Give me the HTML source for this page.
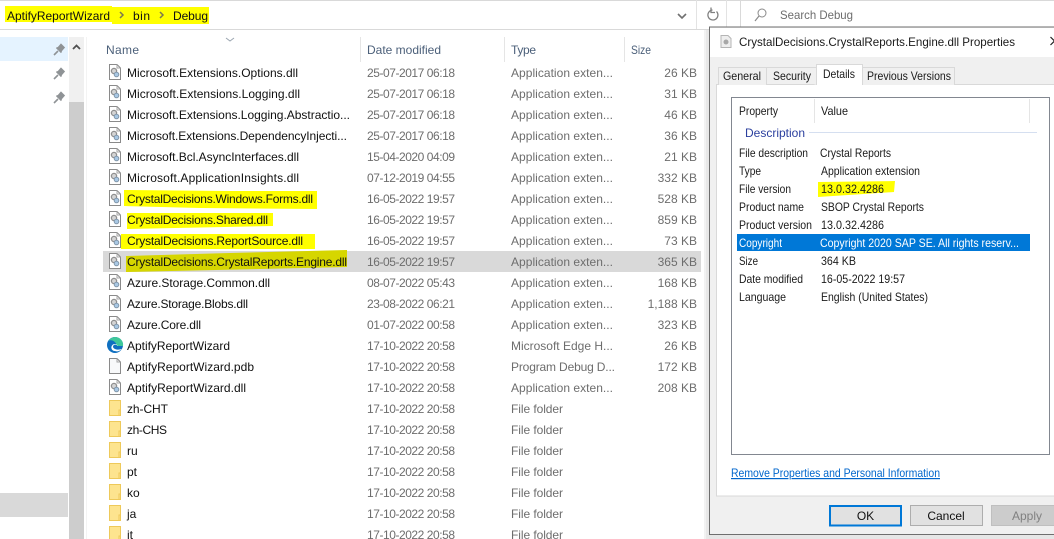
<!DOCTYPE html>
<html><head><meta charset="utf-8"><title>Debug</title>
<style>
html,body{margin:0;padding:0;background:#fff;width:1054px;height:539px;overflow:hidden}
svg{display:block}
text{font-family:"Liberation Sans",sans-serif;font-size:12px}
.n text{fill:#101010}
.g text{fill:#6d6d6d}
.s text{fill:#6d6d6d;text-anchor:end}
.h text{fill:#4c607a}
.d text{fill:#1a1a1a}
</style></head><body>
<svg width="1054" height="539" viewBox="0 0 1054 539" xmlns="http://www.w3.org/2000/svg">
<defs>
<g id="dll"><path d="M.5.500H8L11.500 4V15.500H.5Z" fill="#fff" stroke="#8a8a8a"/><path d="M8 .5V4H11.500" fill="none" stroke="#a5a5a5"/><circle cx="5" cy="7" r="2.600" fill="#d5d5d5" stroke="#8f8f8f" stroke-width="1.300"/><circle cx="7.500" cy="10.500" r="2.300" fill="#a9c8e4" stroke="#8197ab"/></g>
<g id="pdb"><path d="M.5.500H8L11.500 4V15.500H.5Z" fill="#f8f9fa" stroke="#8a8a8a"/><path d="M8 .5V4H11.500" fill="none" stroke="#a5a5a5"/></g>
<g id="fld"><path d="M.5.500H11.500V15.500H.5Z" fill="#fde48f" stroke="#eec95a"/><path d="M10 15V10H11.500" fill="none" stroke="#eec95a"/></g>
<g id="pin"><path d="M5 9 1 13M3.500 5.500 8.500 10.500M5 6 8 2.500 11 5.500 8 9Z" fill="#8f9396" stroke="#8f9396" stroke-width="1.600"/></g>
</defs>

<rect width="1054" height="539" fill="#fff"/>
<!-- top bar -->
<rect x="0" y="0" width="1054" height="1" fill="#d9d9d9"/>
<rect x="0" y="29" width="726" height="1" fill="#d9d9d9"/>
<rect x="740" y="0" width="1" height="30" fill="#d9d9d9"/>
<rect x="696" y="0" width="1" height="29" fill="#e3e3e3"/>
<rect x="726" y="0" width="1" height="29" fill="#e3e3e3"/>
<rect x="740" y="29" width="314" height="1" fill="#d9d9d9"/>
<path d="M5 6H112V7H209V24H112V22H5Z" fill="#ffff00"/>
<text x="7" y="20" fill="#111" textLength="103" lengthAdjust="spacingAndGlyphs">AptifyReportWizard</text>
<path d="M120 12l3 3-3 3M160 12l3 3-3 3" fill="none" stroke="#7a7a50" stroke-width="1.500"/>
<text x="133" y="20" fill="#111" textLength="17">bin</text>
<text x="173" y="20" fill="#111" textLength="35">Debug</text>
<path d="M678 14l4 4 4-4" fill="none" stroke="#707070" stroke-width="1.600"/>
<path d="M716.500 11.500a5 5 0 1 1-4-1.500M711 7.500v5h4" fill="none" stroke="#808080" stroke-width="1.300"/>
<circle cx="762" cy="13" r="4" fill="none" stroke="#8a8a8a"/><path d="M759 16l-4 5" stroke="#8a8a8a" stroke-width="1.200"/>
<text x="780" y="19" fill="#6d6d6d" textLength="73" lengthAdjust="spacingAndGlyphs">Search Debug</text>

<!-- nav pane -->
<rect x="0" y="37" width="68" height="24" fill="#e5f3ff"/>
<rect x="0" y="493" width="68" height="24" fill="#d9d9d9"/>
<use href="#pin" x="53" y="42"/><use href="#pin" x="53" y="66"/><use href="#pin" x="53" y="90"/>
<rect x="69" y="37" width="15" height="502" fill="#f0f0f0"/>
<rect x="69" y="102" width="15" height="437" fill="#cdcdcd"/>
<path d="M73 49l3.500-3.500 3.500 3.500" fill="none" stroke="#505050" stroke-width="1.800"/>
<rect x="86" y="37" width="1" height="502" fill="#f3f3f3"/>

<!-- header -->
<path d="M226 38l4 3 4-3" fill="none" stroke="#9aa5b0"/>
<rect x="360" y="37" width="1" height="25" fill="#e5e5e5"/>
<rect x="504" y="37" width="1" height="25" fill="#e5e5e5"/>
<rect x="624" y="37" width="1" height="25" fill="#e5e5e5"/>
<rect x="704" y="37" width="1" height="25" fill="#e5e5e5"/>
<g class="h">
<text x="106" y="54" textLength="33">Name</text>
<text x="367" y="54" textLength="74" lengthAdjust="spacingAndGlyphs">Date modified</text>
<text x="511" y="54" textLength="25">Type</text>
<text x="631" y="54" textLength="20" lengthAdjust="spacingAndGlyphs">Size</text>
</g>

<!-- selection + highlights -->
<rect x="103" y="251" width="598" height="21" fill="#d9d9d9"/>
<path d="M124 190 230 191H317V209L200 208 124 206Z" fill="#ffff00"/>
<path d="M127 213H273V226L127 229Z" fill="#ffff00"/>
<path d="M121 234H315V249H121Z" fill="#ffff00"/>
<path d="M126 256 230 253 347 250V267L126 272Z" fill="#d6d600"/>

<!-- icons -->
<g transform="translate(0,-1)">
<use href="#dll" x="109" y="65"/><use href="#dll" x="109" y="86"/><use href="#dll" x="109" y="107"/><use href="#dll" x="109" y="128"/><use href="#dll" x="109" y="149"/><use href="#dll" x="109" y="170"/><use href="#dll" x="109" y="191"/><use href="#dll" x="109" y="212"/><use href="#dll" x="109" y="233"/><use href="#dll" x="109" y="254"/><use href="#dll" x="109" y="275"/><use href="#dll" x="109" y="296"/><use href="#dll" x="109" y="317"/>
<use href="#pdb" x="109" y="359"/><use href="#dll" x="109" y="380"/>
<use href="#fld" x="109" y="401"/><use href="#fld" x="109" y="422"/><use href="#fld" x="109" y="443"/><use href="#fld" x="109" y="464"/><use href="#fld" x="109" y="485"/><use href="#fld" x="109" y="506"/><use href="#fld" x="109" y="527"/>
</g>
<circle cx="115" cy="345" r="8" fill="#0f6fc0"/>
<path d="M108.500 341A7.800 7.800 0 0 1 123 346H117C116 341 111 339 108.500 341Z" fill="#3fc79a"/>
<path d="M118 346A3.500 3.500 0 1 0 115 351C117 352 120 351 122 349 119 350 114 350 113 347 113 344 116 344 118 346Z" fill="#fff"/>

<!-- names -->
<g class="n">
<text x="127" y="77" textLength="171">Microsoft.Extensions.Options.dll</text>
<text x="127" y="98" textLength="173">Microsoft.Extensions.Logging.dll</text>
<text x="127" y="119" textLength="223">Microsoft.Extensions.Logging.Abstractio...</text>
<text x="127" y="140" textLength="220">Microsoft.Extensions.DependencyInjecti...</text>
<text x="127" y="161" textLength="172">Microsoft.Bcl.AsyncInterfaces.dll</text>
<text x="127" y="182" textLength="172">Microsoft.ApplicationInsights.dll</text>
<text x="127" y="203" textLength="186">CrystalDecisions.Windows.Forms.dll</text>
<text x="127" y="224" textLength="141">CrystalDecisions.Shared.dll</text>
<text x="127" y="245" textLength="176">CrystalDecisions.ReportSource.dll</text>
<text x="127" y="266" textLength="220">CrystalDecisions.CrystalReports.Engine.dll</text>
<text x="127" y="287" textLength="143">Azure.Storage.Common.dll</text>
<text x="127" y="308" textLength="121">Azure.Storage.Blobs.dll</text>
<text x="127" y="329" textLength="74">Azure.Core.dll</text>
<text x="127" y="350" textLength="103">AptifyReportWizard</text>
<text x="127" y="371" textLength="127">AptifyReportWizard.pdb</text>
<text x="127" y="392" textLength="119">AptifyReportWizard.dll</text>
<text x="127" y="413" textLength="41">zh-CHT</text>
<text x="127" y="434" textLength="40">zh-CHS</text>
<text x="127" y="455">ru</text>
<text x="127" y="476">pt</text>
<text x="127" y="497">ko</text>
<text x="127" y="518">ja</text>
<text x="127" y="539">it</text>
</g>

<!-- dates -->
<g class="g">
<text x="367" y="77" textLength="88">25-07-2017 06:18</text>
<text x="367" y="98" textLength="88">25-07-2017 06:18</text>
<text x="367" y="119" textLength="88">25-07-2017 06:18</text>
<text x="367" y="140" textLength="88">25-07-2017 06:18</text>
<text x="367" y="161" textLength="88">15-04-2020 04:09</text>
<text x="367" y="182" textLength="88">07-12-2019 04:55</text>
<text x="367" y="203" textLength="88">16-05-2022 19:57</text>
<text x="367" y="224" textLength="88">16-05-2022 19:57</text>
<text x="367" y="245" textLength="88">16-05-2022 19:57</text>
<text x="367" y="266" textLength="88">16-05-2022 19:57</text>
<text x="367" y="287" textLength="88">08-07-2022 05:43</text>
<text x="367" y="308" textLength="88">23-08-2022 06:21</text>
<text x="367" y="329" textLength="88">01-07-2022 00:58</text>
<text x="367" y="350" textLength="88">17-10-2022 20:58</text>
<text x="367" y="371" textLength="88">17-10-2022 20:58</text>
<text x="367" y="392" textLength="88">17-10-2022 20:58</text>
<text x="367" y="413" textLength="88">17-10-2022 20:58</text>
<text x="367" y="434" textLength="88">17-10-2022 20:58</text>
<text x="367" y="455" textLength="88">17-10-2022 20:58</text>
<text x="367" y="476" textLength="88">17-10-2022 20:58</text>
<text x="367" y="497" textLength="88">17-10-2022 20:58</text>
<text x="367" y="518" textLength="88">17-10-2022 20:58</text>
<text x="367" y="539" textLength="88">17-10-2022 20:58</text>
</g>

<!-- types -->
<g class="g">
<text x="511" y="77" textLength="102">Application exten...</text>
<text x="511" y="98" textLength="102">Application exten...</text>
<text x="511" y="119" textLength="102">Application exten...</text>
<text x="511" y="140" textLength="102">Application exten...</text>
<text x="511" y="161" textLength="102">Application exten...</text>
<text x="511" y="182" textLength="102">Application exten...</text>
<text x="511" y="203" textLength="102">Application exten...</text>
<text x="511" y="224" textLength="102">Application exten...</text>
<text x="511" y="245" textLength="102">Application exten...</text>
<text x="511" y="266" textLength="102">Application exten...</text>
<text x="511" y="287" textLength="102">Application exten...</text>
<text x="511" y="308" textLength="102">Application exten...</text>
<text x="511" y="329" textLength="102">Application exten...</text>
<text x="511" y="350" textLength="102">Microsoft Edge H...</text>
<text x="511" y="371" textLength="104">Program Debug D...</text>
<text x="511" y="392" textLength="102">Application exten...</text>
<text x="511" y="413" textLength="52">File folder</text>
<text x="511" y="434" textLength="52">File folder</text>
<text x="511" y="455" textLength="52">File folder</text>
<text x="511" y="476" textLength="52">File folder</text>
<text x="511" y="497" textLength="52">File folder</text>
<text x="511" y="518" textLength="52">File folder</text>
<text x="511" y="539" textLength="52">File folder</text>
</g>

<!-- sizes -->
<g class="s">
<text x="697" y="77">26 KB</text><text x="697" y="98">31 KB</text><text x="697" y="119">46 KB</text><text x="697" y="140">36 KB</text><text x="697" y="161">21 KB</text><text x="697" y="182">332 KB</text><text x="697" y="203">528 KB</text><text x="697" y="224">859 KB</text><text x="697" y="245">73 KB</text><text x="697" y="266">365 KB</text><text x="697" y="287">168 KB</text><text x="697" y="308">1,188 KB</text><text x="697" y="329">323 KB</text><text x="697" y="350">26 KB</text><text x="697" y="371">172 KB</text><text x="697" y="392">208 KB</text>
</g>

<!-- dialog shadow -->
<rect x="704" y="30" width="5" height="509" fill="#f2f2f2"/>
<rect x="706" y="30" width="3" height="509" fill="#e8e8e8"/>
<rect x="709" y="535" width="345" height="4" fill="#e6e6e6"/>
<!-- dialog -->
<rect x="709.500" y="27" width="345" height="507.500" fill="#f0f0f0" stroke="#6e6e6e"/>
<rect x="710" y="28" width="344" height="29" fill="#fff"/>
<path d="M721 35.500H728L731 38.500V47.500H721Z" fill="#eee" stroke="#b5b5b5"/><circle cx="726" cy="42" r="2.500" fill="#a8a8a8"/>
<text x="739" y="46" fill="#1a1a1a" textLength="276" lengthAdjust="spacingAndGlyphs">CrystalDecisions.CrystalReports.Engine.dll Properties</text>
<path d="M1050.500 37l8 8M1058.500 37l-8 8" stroke="#222" stroke-width="1.200"/>
<!-- tab panel -->
<rect x="716.500" y="84.500" width="340" height="411.500" fill="#fff" stroke="#d9d9d9"/>
<!-- tabs -->
<path d="M718.500 85V67.500H766.500V85M766.500 67.500H816.500V85M862.500 85V67.500H954.500V85" fill="#f0f0f0" stroke="#d9d9d9"/>
<path d="M816.500 85V64.500H862.500V85" fill="#fff" stroke="#d9d9d9"/>
<rect x="817" y="84" width="45" height="2" fill="#fff"/>
<g class="d">
<text x="723" y="80" textLength="38" lengthAdjust="spacingAndGlyphs">General</text>
<text x="773" y="80" textLength="38" lengthAdjust="spacingAndGlyphs">Security</text>
<text x="823" y="78" textLength="32" lengthAdjust="spacingAndGlyphs">Details</text>
<text x="867" y="80" textLength="84" lengthAdjust="spacingAndGlyphs">Previous Versions</text>
</g>
<!-- list -->
<rect x="731.500" y="97.500" width="318" height="357" fill="#fff" stroke="#828790"/>
<rect x="814" y="99" width="1" height="24" fill="#e5e5e5"/>
<rect x="1029" y="99" width="1" height="24" fill="#e5e5e5"/>
<g class="d">
<text x="739" y="115" textLength="39" lengthAdjust="spacingAndGlyphs">Property</text>
<text x="821" y="115" textLength="27" lengthAdjust="spacingAndGlyphs">Value</text>
</g>
<text x="745" y="137" fill="#2b3f9e" textLength="60" lengthAdjust="spacingAndGlyphs">Description</text>
<rect x="809" y="132" width="228" height="1" fill="#d5dff0"/>
<path d="M818 182 895 181 894 192 818 197Z" fill="#ffff00"/>
<rect x="737" y="234" width="293" height="17" fill="#0078d7"/>
<g class="d">
<text x="739" y="157" textLength="69" lengthAdjust="spacingAndGlyphs">File description</text><text x="820" y="157" textLength="71" lengthAdjust="spacingAndGlyphs">Crystal Reports</text>
<text x="739" y="175" textLength="22" lengthAdjust="spacingAndGlyphs">Type</text><text x="821" y="175" textLength="99" lengthAdjust="spacingAndGlyphs">Application extension</text>
<text x="739" y="193" textLength="52" lengthAdjust="spacingAndGlyphs">File version</text><text x="821" y="193" textLength="63" lengthAdjust="spacingAndGlyphs">13.0.32.4286</text>
<text x="739" y="211" textLength="65" lengthAdjust="spacingAndGlyphs">Product name</text><text x="821" y="211" textLength="103" lengthAdjust="spacingAndGlyphs">SBOP Crystal Reports</text>
<text x="739" y="229" textLength="73" lengthAdjust="spacingAndGlyphs">Product version</text><text x="821" y="229" textLength="63" lengthAdjust="spacingAndGlyphs">13.0.32.4286</text>
<text x="739" y="265" textLength="19" lengthAdjust="spacingAndGlyphs">Size</text><text x="821" y="265" textLength="35" lengthAdjust="spacingAndGlyphs">364 KB</text>
<text x="739" y="283" textLength="64" lengthAdjust="spacingAndGlyphs">Date modified</text><text x="821" y="283" textLength="84" lengthAdjust="spacingAndGlyphs">16-05-2022 19:57</text>
<text x="739" y="301" textLength="47" lengthAdjust="spacingAndGlyphs">Language</text><text x="821" y="301" textLength="107" lengthAdjust="spacingAndGlyphs">English (United States)</text>
</g>
<text x="739" y="247" fill="#fff" textLength="43" lengthAdjust="spacingAndGlyphs">Copyright</text>
<text x="820" y="247" fill="#fff" textLength="199" lengthAdjust="spacingAndGlyphs">Copyright 2020 SAP SE. All rights reserv...</text>
<text x="731" y="477" fill="#0066cc" textLength="209" lengthAdjust="spacingAndGlyphs" text-decoration="underline">Remove Properties and Personal Information</text>
<!-- buttons -->
<rect x="830" y="506" width="71" height="19.500" fill="#e1e1e1" stroke="#0078d7" stroke-width="2"/>
<text x="865.500" y="520" fill="#111" text-anchor="middle">OK</text>
<rect x="910.500" y="505.500" width="72" height="20" fill="#e1e1e1" stroke="#adadad"/>
<text x="946" y="520" fill="#111" text-anchor="middle">Cancel</text>
<rect x="991.500" y="505.500" width="70" height="20" fill="#cccccc" stroke="#bfbfbf"/>
<text x="1027" y="520" fill="#808080" text-anchor="middle">Apply</text>
</svg>
</body></html>
